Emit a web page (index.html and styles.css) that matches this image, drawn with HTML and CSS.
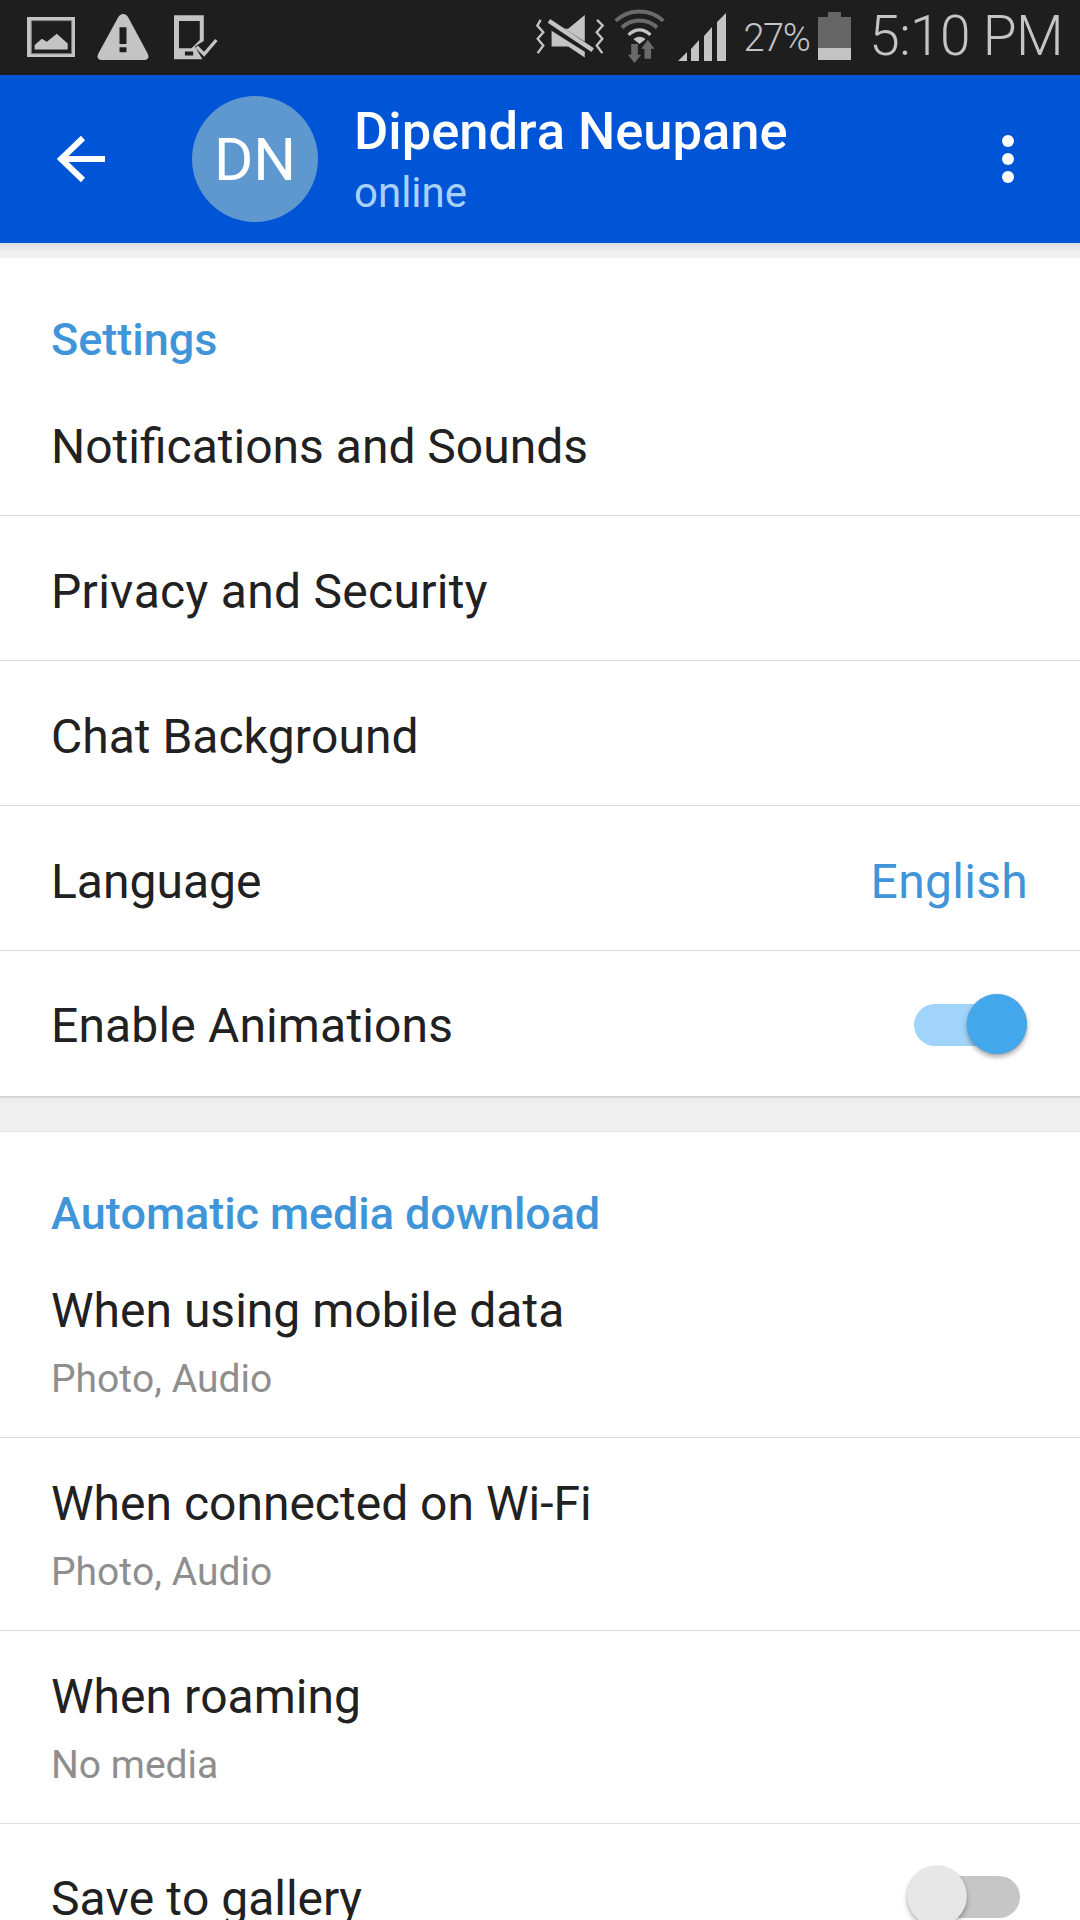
FILE: index.html
```html
<!DOCTYPE html>
<html lang="en">
<head>
<meta charset="utf-8">
<title>Settings</title>
<link rel="stylesheet" href="styles.css">
</head>
<body>
<div class="phone">
  <div class="statusbar">
    <div class="status-left">
      <svg class="ic-pic" viewBox="20 37 145 121"><path fill="#c4c4c4" fill-rule="evenodd" d="M20 37H165V158H20ZM33 48V148H155V48Z"/><path fill="none" stroke="#808080" stroke-width="3" d="M33 48H155V148H33Z"/><path fill="#c4c4c4" d="M43 135V122L65 103L80 112L110 88L143 117V135Z"/></svg>
      <svg class="ic-warn" viewBox="230 28 155 138"><path fill="#c4c4c4" fill-rule="evenodd" d="M308 28C301 28 296 32 293 38L234 146C227 158 233 166 243 166H372C382 166 388 158 381 146L323 38C320 32 315 28 308 28ZM297 68H318V118H297ZM297 128H318V143H297Z"/></svg>
      <svg class="ic-dev" viewBox="462 30 133 135"><path fill="#c4c4c4" fill-rule="evenodd" d="M462 30H552V108L525 125L548 163H462ZM477 48V130H515L540 105V48ZM495 140V152H520V140Z"/><path fill="none" stroke="#c4c4c4" stroke-width="10" d="M530 125L553 148L590 105"/></svg>
    </div>
    <div class="status-right">
      <svg class="ic-vib" viewBox="15 25 220 140"><g fill="none" stroke="#c4c4c4" stroke-width="7"><path d="M35 45L25 62L43 82L26 102L43 122L26 145"/><path d="M205 45L222 62L204 82L221 102L204 122L221 145"/></g><path fill="#c4c4c4" d="M68 72H118L168 30V158L118 125H68Z"/><path fill="none" stroke="#1e1e1e" stroke-width="26" d="M45 48L200 146"/><path fill="none" stroke="#c4c4c4" stroke-width="13" d="M60 48L192 136"/></svg>
      <svg class="ic-wifi" viewBox="250 10 160 170"><g fill="none" stroke-width="12"><path stroke="#6a6a6a" d="M258 48C298 10 362 10 402 48"/><path stroke="#6a6a6a" d="M277 68C308 40 352 40 383 68"/></g><path fill="none" stroke="#c4c4c4" stroke-width="10" d="M297 90C318 70 342 70 363 90"/><path fill="#c4c4c4" d="M330 96C338 96 344 99 348 103L330 118L312 103C316 99 322 96 330 96Z"/><path fill="#6a6a6a" d="M305 118H325V150H335L315 175L295 150H305Z"/><path fill="#6a6a6a" d="M355 105L375 132H365V162H345V132H335Z"/></svg>
      <svg class="ic-signal" viewBox="0 0 48 48"><path fill="#c4c4c4" d="M0 48L9 39V48ZM13 36L21 27V48H13ZM26 23L34 14V48H26ZM39 9L48 0V48H39Z"/></svg>
      <span class="batt-pct">27%</span>
      <div class="battery"><div class="batt-cap"></div><div class="batt-body"><div class="batt-fill"></div></div></div>
      <span class="clock">5:10 PM</span>
    </div>
  </div>
  <header class="appbar">
    <svg class="ic-back" viewBox="0 0 48 48"><path fill="none" stroke="#fff" stroke-width="6" d="M48 24H5M26 3L4 24L26 45"/></svg>
    <div class="avatar">DN</div>
    <div class="who">
      <div class="who-name">Dipendra Neupane</div>
      <div class="who-status">online</div>
    </div>
    <div class="kebab"><i></i><i></i><i></i></div>
  </header>
  <div class="appbar-shadow"></div>
  <section class="group group-settings">
    <h2 class="group-title">Settings</h2>
    <div class="row row-first">Notifications and Sounds</div>
    <div class="row row-wide">Privacy and Security</div>
    <div class="row">Chat Background</div>
    <div class="row row-split"><span>Language</span><span class="value">English</span></div>
    <div class="row row-split row-last"><span class="anim-label">Enable Animations</span><span class="switch on"><i></i></span></div>
  </section>
  <div class="gap"></div>
  <section class="group">
    <h2 class="group-title title-media">Automatic media download</h2>
    <div class="row2 row2-first"><div class="main">When using mobile data</div><div class="sub">Photo, Audio</div></div>
    <div class="row2"><div class="main">When connected on Wi-Fi</div><div class="sub">Photo, Audio</div></div>
    <div class="row2"><div class="main">When roaming</div><div class="sub">No media</div></div>
    <div class="row row-split row-end"><span>Save to gallery</span><span class="switch off"><i></i></span></div>
  </section>
</div>
</body>
</html>
```

FILE: styles.css
```css
* { box-sizing: border-box; }
html, body { margin: 0; padding: 0; }
body { width: 1080px; height: 1920px; overflow: hidden; background: #fff; font-family: Roboto, "Noto Sans", sans-serif; font-kerning: none; color: #212121; }
.phone { width: 1080px; height: 1920px; overflow: hidden; }

.statusbar { height: 75px; background: #1e1e1e; display: flex; justify-content: space-between; padding: 0 17px 0 27px; }
.status-left, .status-right { display: flex; align-items: flex-start; }
.ic-pic { width: 48px; height: 40px; margin-top: 17px; flex: none; }
.ic-warn { width: 52px; height: 46px; margin-left: 22px; margin-top: 14px; flex: none; }
.ic-dev { width: 44px; height: 45px; margin-left: 25px; margin-top: 15px; flex: none; }
.ic-vib { width: 73px; height: 47px; margin-top: 13px; flex: none; }
.ic-wifi { width: 53px; height: 57px; margin-left: 6px; margin-top: 8px; flex: none; }
.ic-signal { width: 48px; height: 48px; margin-left: 12px; margin-top: 13px; flex: none; }
.batt-pct { font-size: 38px; font-weight: 300; color: #c4c4c4; margin-left: 18px; line-height: 44px; margin-top: 16px; letter-spacing: -1.5px; }
.battery { margin-left: 9px; width: 33px; display: flex; flex-direction: column; align-items: center; margin-top: 12px; }
.batt-cap { width: 13px; height: 5px; background: #666; }
.batt-body { width: 33px; height: 43px; background: #666; display: flex; align-items: flex-end; }
.batt-fill { width: 100%; height: 12px; background: #c4c4c4; }
.clock { font-size: 55px; font-weight: 300; color: #c4c4c4; margin-left: 18px; line-height: 64px; margin-top: 4px; letter-spacing: -0.6px; }

.appbar { height: 168px; background: #0054d6; display: flex; align-items: center; padding-left: 57px; }
.ic-back { width: 48px; height: 48px; flex: none; }
.avatar { width: 126px; height: 126px; margin-left: 87px; border-radius: 50%; background: #5e98cf; color: #fff; font-size: 60px; display: flex; align-items: center; justify-content: center; flex: none; }
.who { margin-left: 36px; flex: 1; padding-top: 2px; }
.who-name { font-size: 52.5px; font-weight: 500; color: #fff; line-height: 56px; }
.who-status { font-size: 42px; color: #a9d0f8; line-height: 48px; margin-top: 10px; }
.kebab { width: 12px; margin-right: 66px; display: flex; flex-direction: column; gap: 6px; }
.kebab i { width: 12px; height: 12px; border-radius: 50%; background: #fff; }

.appbar-shadow { height: 15px; background: linear-gradient(#dcdcdc, #f0f0f0 55%, #f0f0f0); }
.group { background: #fff; }
.group-settings { height: 838px; }
.group-title { margin: 0; font-size: 45px; font-weight: 500; color: #3f95d8; padding: 57px 0 0 51px; height: 106px; line-height: 50px; }
.title-media { letter-spacing: -0.1px; }
.row { height: 145px; font-size: 48px; padding: 7px 52px 0 51px; display: flex; align-items: center; border-bottom: 1px solid #dcdcdc; }
.row-first { height: 152px; padding-top: 14px; }
.row-wide { letter-spacing: 0.3px; }
.row-last { height: 145px; padding-top: 4px; border-bottom: 0; }
.anim-label { letter-spacing: 0.15px; }
.row-end { padding-top: 3px; border-bottom: 0; }
.row-split { justify-content: space-between; }
.value { color: #3f95d8; letter-spacing: 0.3px; }
.gap { height: 36px; background: linear-gradient(#cfcfcf, #ececec 3px, #f0f0f0 8px); border-bottom: 1px solid #e2e2e2; }
.row2 { height: 193px; padding: 3px 52px 0 51px; border-bottom: 1px solid #dcdcdc; display: flex; flex-direction: column; justify-content: center; }
.row2-first { height: 200px; padding-top: 10px; }
.main { font-size: 48px; line-height: 54px; }
.sub { font-size: 39px; color: #8e8e8e; line-height: 44px; margin-top: 19px; }

.switch { position: relative; width: 112px; height: 42px; border-radius: 21px; display: block; margin-top: -2px; }
.switch i { position: absolute; width: 60px; height: 60px; border-radius: 50%; top: -10px; }
.switch.on { background: #a0d4fa; margin-right: 2px; }
.switch.on i { right: -1px; background: #43a7ec; box-shadow: 0 3px 5px rgba(0,0,0,.35), 0 0 1px rgba(0,0,0,.2); }
.switch.off { background: #c6c6c6; margin-right: 8px; }
.switch.off i { left: -1px; background: #e7e7e7; box-shadow: 0 3px 5px rgba(0,0,0,.3), 0 0 1px rgba(0,0,0,.2); }
```
